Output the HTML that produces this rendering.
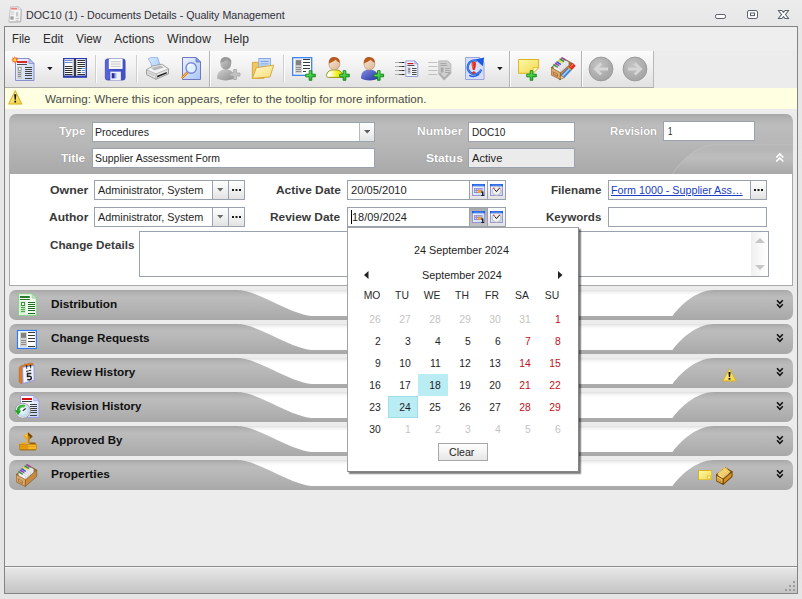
<!DOCTYPE html>
<html>
<head>
<meta charset="utf-8">
<title>DOC10 (1) - Documents Details - Quality Management</title>
<style>
*{box-sizing:border-box;margin:0;padding:0}
html,body{width:802px;height:599px;overflow:hidden;background:#e6e6e6;font-family:"Liberation Sans",sans-serif;font-size:11.5px;color:#1e1e1e}
#win{position:absolute;left:0;top:0;width:802px;height:599px;background:linear-gradient(#ececec 0,#e7e7e7 26px,#e5e5e5 100%);overflow:hidden}
#win div,#win svg{position:absolute}
.tx{height:20px;line-height:20px;white-space:pre;transform-origin:0 50%}
#client{left:4px;top:26px;width:794px;height:568px;background:#ececec;border:1px solid #848484}
#menubar{left:5px;top:27px;width:792px;height:24px;background:#eeeeee}
#toolbar{left:5px;top:51px;width:649px;height:37px;background:linear-gradient(#fbfbfb 0,#f3f3f3 40%,#e9e9e9 70%,#e2e2e2 100%);border-right:1px solid #b9b9b9;border-bottom:1px solid #acacac}
.sep{top:55px;width:2px;height:28px;background:#cfcfcf;border-right:1px solid #fcfcfc}
.sepf{top:51px;width:2px;height:36px;background:#b4b4b4;border-right:1px solid #fdfdfd}
#warn{left:5px;top:88px;width:792px;height:21px;background:#ffffe1}
#hdr{left:9px;top:114px;width:784px;height:60px;border-radius:7px 7px 0 0;overflow:hidden;background:linear-gradient(#a7a7a7 0,#b4b4b4 8%,#bcbcbc 20%,#b8b8b8 45%,#b0b0b0 75%,#a9a9a9 100%)}
#formbox{left:9px;top:174px;width:784px;height:112px;background:#fff;border:1px solid #a9a9a9;border-top:none}
.inp{background:#fff;border:1px solid #9aa2b0}
.btn{background:linear-gradient(#fefefe 0,#f2f2f2 50%,#e2e2e2 100%);border:1px solid #9aa2b0}
.acc{left:9px;width:784px;height:30px}
#status{left:5px;top:566px;width:792px;height:27px;background:linear-gradient(#e9e9e9 0,#d6d6d6 50%,#c4c4c4 100%);border-top:1px solid #8c8c8c;box-shadow:inset 0 1px 0 #f4f4f4}
#cal{left:347px;top:227px;width:232px;height:245px;background:#fff;border:1px solid #a3a3a3;border-right-color:#858585;border-bottom-color:#858585;box-shadow:1.500px 1.500px 1.200px rgba(0,0,0,.5)}
.d{width:30px;height:22px;line-height:22px;text-align:right;padding-right:8px;font-size:11.5px;color:#1e1e1e;transform:scaleX(.9);transform-origin:100% 50%}
.d.o{color:#c3c3c3}
.d.w{color:#c41020}
.dh{width:30px;height:20px;line-height:20px;text-align:center;font-size:11.5px;color:#2a2a2a;transform:scaleX(.9);transform-origin:50% 50%}
</style>
</head>
<body>
<div id="win">
<div id="client"></div>
<div id="menubar"></div>
<div id="toolbar"></div>
<div class="sep" style="left:95px"></div>
<div class="sep" style="left:136px"></div>
<div class="sepf" style="left:209px"></div>
<div class="sep" style="left:283px"></div>
<div class="sepf" style="left:509px"></div>
<div class="sepf" style="left:581px"></div>
<div id="warn"></div>
<div id="hdr">
<svg width="784" height="60" viewBox="0 0 784 60" style="left:0;top:0">
<defs><linearGradient id="tabg" x1="0" y1="0" x2="0" y2="1"><stop offset="0" stop-color="#b4b4b4"/><stop offset=".45" stop-color="#bdbdbd"/><stop offset="1" stop-color="#a8a8a8"/></linearGradient></defs>
<path d="M663.500,60 C669,51 686,31 705,31 L784,31 L784,60 Z" fill="url(#tabg)"/>
<path d="M663.500,60 C669,51 686,31 705,31 L784,31" fill="none" stroke="#c4c4c4" stroke-width="1" opacity=".7"/>
<path d="M767.3,43.5 l3.5,-3.5 l3.5,3.5 M767.3,47.5 l3.5,-3.5 l3.5,3.5" fill="none" stroke="#fff" stroke-width="1.6"/>
</svg>
</div>
<div id="formbox"></div>
<div id="status"></div>
<svg width="12" height="12" viewBox="0 0 12 12" style="left:784px;top:580px"><g fill="#9c9c9c"><rect x="9" y="1" width="2" height="2"/><rect x="5" y="5" width="2" height="2"/><rect x="9" y="5" width="2" height="2"/><rect x="1" y="9" width="2" height="2"/><rect x="5" y="9" width="2" height="2"/><rect x="9" y="9" width="2" height="2"/></g></svg>
<!-- window buttons -->
<svg width="80" height="14" viewBox="0 0 80 14" style="left:712px;top:8px">
<rect x="3.5" y="6.5" width="10" height="4" rx="1.6" fill="#fff" stroke="#5a606b" stroke-width="1"/>
<rect x="35.5" y="2.5" width="10" height="8" rx="1.6" fill="#fff" stroke="#5a606b" stroke-width="1"/>
<rect x="38.5" y="5" width="4" height="2.6" fill="#fff" stroke="#5a606b" stroke-width="1"/>
<path d="M66.3,2.5 h3.6 l1.6,1.9 l1.6,-1.9 h3.600 l-3.300,4 l3.300,4 h-3.600 l-1.600,-1.900 l-1.600,1.900 h-3.600 l3.300,-4 z" fill="#fff" stroke="#5a606b" stroke-width="1.100" stroke-linejoin="round"/>
</svg>
<!-- warn icon -->
<svg width="14.500" height="15" viewBox="0 0 15 14" preserveAspectRatio="none" style="left:8px;top:90px"><use href="#warnico"/></svg>
<!-- title icon -->
<svg width="15" height="17" viewBox="0 0 15 17" style="left:8px;top:5.500px">
<path d="M2.600,0.800 L10.400,0.800 L13.400,3.600 L12.600,15.800 L0.800,15.800 Z" fill="#f3f3f3" stroke="#c2c2c2" stroke-width="1"/>
<path d="M10.400,0.800 L10.400,3.600 L13.400,3.600 Z" fill="#fafafa" stroke="#c2c2c2" stroke-width=".7"/>
<path d="M13.400,4 L12.600,15.800 L1.400,16.400" fill="none" stroke="#b4b4b4" stroke-width=".9"/>
<rect x="3.200" y="1.800" width="6" height="1.800" fill="#f07c7c"/>
<g fill="#c8c8c8"><rect x="3" y="5.600" width="3.400" height="1"/><rect x="3" y="7.600" width="2.600" height="1"/><rect x="8" y="6" width="2.200" height="4.600"/><rect x="7.600" y="12" width="3.600" height="1"/><rect x="7.600" y="13.800" width="3" height="1"/></g>
<rect x="2.400" y="10.400" width="3.200" height="3.200" fill="#9e9e9e"/>
</svg>
<!-- shared defs -->
<svg width="0" height="0" style="left:0;top:0"><defs>
<linearGradient id="gPlus" x1="0" y1="0" x2="1" y2="1"><stop offset="0" stop-color="#8cf47c"/><stop offset=".5" stop-color="#44d044"/><stop offset="1" stop-color="#1ca41c"/></linearGradient>
<g id="plus"><path d="M4.2,0.7 h2.600 v3.500 h3.500 v2.600 h-3.500 v3.500 h-2.600 v-3.500 h-3.500 v-2.600 h3.500 z" fill="url(#gPlus)" stroke="#0c8414" stroke-width=".9" stroke-linejoin="round"/></g>
<linearGradient id="gDoc" x1="0" y1="0" x2="1" y2="1"><stop offset="0" stop-color="#f2f6ff"/><stop offset="1" stop-color="#c4d4f4"/></linearGradient>
<linearGradient id="gSkin" x1="0" y1="0" x2="1" y2="1"><stop offset="0" stop-color="#fbe6d2"/><stop offset="1" stop-color="#d9b594"/></linearGradient>
<linearGradient id="gYel" x1="0" y1="0" x2="1" y2="0"><stop offset="0" stop-color="#ffffff"/><stop offset=".2" stop-color="#fffff0"/><stop offset=".65" stop-color="#f0f020"/><stop offset="1" stop-color="#e4e410"/></linearGradient>
<linearGradient id="gBlu" x1="0" y1="0" x2="1" y2="1"><stop offset="0" stop-color="#7e8ce4"/><stop offset=".6" stop-color="#4a56bc"/><stop offset="1" stop-color="#2a349c"/></linearGradient>
<linearGradient id="gGry" x1="0" y1="0" x2="1" y2="1"><stop offset="0" stop-color="#cfcfcf"/><stop offset="1" stop-color="#8e8e8e"/></linearGradient>
<linearGradient id="gFold" x1="0" y1="0" x2="1" y2="1"><stop offset="0" stop-color="#fffad0"/><stop offset="1" stop-color="#f6dc78"/></linearGradient>
<linearGradient id="gPrev" x1="0" y1="0" x2="1" y2="1"><stop offset="0" stop-color="#eef4ff"/><stop offset="1" stop-color="#a8c4f4"/></linearGradient>
<linearGradient id="gPap" x1="0" y1="0" x2="1" y2="1"><stop offset="0" stop-color="#d8ecff"/><stop offset="1" stop-color="#a4c8f8"/></linearGradient>
<linearGradient id="gNote" x1="0" y1="0" x2="1" y2="1"><stop offset="0" stop-color="#fff9a8"/><stop offset="1" stop-color="#f2d84c"/></linearGradient>
<radialGradient id="gBall" cx=".4" cy=".35" r=".7"><stop offset="0" stop-color="#c4c4c4"/><stop offset="1" stop-color="#a2a2a2"/></radialGradient>
<g id="userhead"><ellipse cx="8" cy="7" rx="5.500" ry="5.900" fill="url(#gSkin)" stroke="#b08860" stroke-width=".6"/><path d="M2.6,6.4 C1.8,1.4 5.8,-0.4 9,0.2 C12.6,0.6 14,3.6 13.2,6 C11.4,4.6 10,3.6 9.200,2.800 C7.800,4.200 5,5.400 2.600,6.400 z" fill="#b85a1c"/></g>
<g id="cardbox">
<path d="M0.25,10.5 L11.5,0.75 L20.75,6 L9.5,15.75 Z" fill="#9a6c34" stroke="#8a5a24" stroke-width="0.7" stroke-linejoin="round"/>
<polygon points="10.60,1.20 17.60,5.20 17.60,10.70 10.60,6.70" fill="#f1f1f6" stroke="#b4b4c4" stroke-width=".45"/>
<polygon points="10.30,-0.30 14.70,2.20 14.70,4.00 10.30,1.50" fill="#a23cb4"/>
<polygon points="9.00,2.60 16.00,6.60 16.00,12.10 9.00,8.10" fill="#f1f1f6" stroke="#b4b4c4" stroke-width=".45"/>
<polygon points="8.70,1.10 13.10,3.60 13.10,5.40 8.70,2.90" fill="#2f9a34"/>
<polygon points="7.40,4.00 14.40,8.00 14.40,13.50 7.40,9.50" fill="#f1f1f6" stroke="#b4b4c4" stroke-width=".45"/>
<polygon points="7.10,2.50 11.50,5.00 11.50,6.80 7.10,4.30" fill="#f0e034"/>
<polygon points="5.80,5.40 12.80,9.40 12.80,14.90 5.80,10.90" fill="#f1f1f6" stroke="#b4b4c4" stroke-width=".45"/>
<polygon points="5.50,3.90 9.90,6.40 9.90,8.20 5.50,5.70" fill="#2c5ce0"/>
<polygon points="4.20,6.80 11.20,10.80 11.20,16.30 4.20,12.30" fill="#f1f1f6" stroke="#b4b4c4" stroke-width=".45"/>
<polygon points="3.90,5.30 8.30,7.80 8.30,9.60 3.90,7.10" fill="#a23cb4"/>
<polygon points="2.60,8.20 9.60,12.20 9.60,17.70 2.60,13.70" fill="#f1f1f6" stroke="#b4b4c4" stroke-width=".45"/>
<polygon points="2.30,6.70 6.70,9.20 6.70,11.00 2.30,8.50" fill="#2f9a34"/>
<polygon points="0.25,10.5 9.5,15.75 9.25,22.5 0.25,18" fill="#dcaa6a" stroke="#8a5a24" stroke-width="0.7" stroke-linejoin="round"/>
<polygon points="9.5,15.75 20.75,6 20.75,12.5 9.25,22.5" fill="#c48a42" stroke="#8a5a24" stroke-width="0.7" stroke-linejoin="round"/>
<polygon points="1.9,14.2 6.9,17.1 6.9,20.2 1.9,17.4" fill="#a87438"/>
<polygon points="2.9,15.6 5.9,17.3 5.9,18.8 2.9,17.1" fill="#dcaa6a"/>
</g>
</defs></svg>

<!-- 1 new document -->
<svg width="26" height="26" viewBox="0 0 26 26" style="left:10px;top:56px">
<path d="M5.5,2.5 h13.500 l5,5 v17 h-18.500 z" fill="url(#gDoc)" stroke="#8a90cc" stroke-width="1"/>
<path d="M19,2.5 v5 h5 z" fill="#b8c8f4" stroke="#8a90cc" stroke-width=".8"/>
<rect x="7" y="8" width="10" height="1" fill="#505050"/>
<rect x="7" y="10.500" width="5" height="12.500" fill="#cfcfcf"/>
<rect x="8.500" y="11.700" width="2.600" height="2.600" fill="#fff" stroke="#8c8c8c" stroke-width=".8"/>
<g fill="#8e8e8e"><rect x="8" y="16" width="3" height="1"/><rect x="8" y="18" width="3" height="1"/><rect x="8" y="20" width="3" height="1"/></g>
<g fill="#454545"><rect x="15" y="11" width="7" height="1"/><rect x="15" y="13" width="7" height="1"/><rect x="15" y="15" width="7" height="1"/><rect x="15" y="17" width="7" height="1"/><rect x="15" y="19" width="7" height="1"/><rect x="15" y="22" width="7" height="1"/></g>
<rect x="7" y="5.100" width="10.200" height="1.800" fill="#e01414"/>
<g transform="translate(1.700,0) scale(.78)"><path d="M4,0.400 l1,2.200 l2.400,-1 l-1,2.400 l2.200,1 l-2.200,1 l1,2.400 l-2.400,-1 l-1,2.200 l-1,-2.200 l-2.400,1 l1,-2.400 l-2.200,-1 l2.200,-1 l-1,-2.400 l2.400,1 z" fill="#ff5a10"/><circle cx="4" cy="5" r="2" fill="#ffd83c"/></g>
</svg>
<svg width="6" height="4" viewBox="0 0 6 4" style="left:46.5px;top:67px"><path d="M0.2,0 h5.400 l-2.700,3.200 z" fill="#1a1a1a"/></svg>

<!-- 2 book -->
<svg width="26" height="22" viewBox="0 0 26 22" style="left:62px;top:57px">
<rect x="1" y="1" width="24" height="19.800" fill="#2c3cb0"/>
<rect x="2.400" y="2.200" width="9.800" height="16.300" fill="#fdfdfd"/>
<rect x="13.800" y="2.200" width="9.800" height="16.300" fill="#fdfdfd"/>
<rect x="10.600" y="2.200" width="1.600" height="16.300" fill="#c4c4c4"/><rect x="13.800" y="2.200" width="1.400" height="16.300" fill="#d8d8d8"/>
<rect x="12.200" y="1.600" width="1.600" height="18" fill="#2a2a2a"/>
<g fill="#6c8ccc"><rect x="3" y="3" width="7.400" height="1"/><rect x="3" y="5" width="7.400" height="1"/></g>
<g fill="#303030"><rect x="3" y="9" width="7.400" height="1"/><rect x="3" y="11" width="7.400" height="1"/><rect x="3" y="13" width="7.400" height="1"/><rect x="3" y="15" width="7.400" height="1"/><rect x="3" y="17" width="7.400" height="1"/>
<rect x="15.400" y="3" width="7.600" height="1"/><rect x="15.400" y="5" width="7.600" height="1"/><rect x="15.400" y="7" width="7.600" height="1"/><rect x="15.400" y="9" width="7.600" height="1"/><rect x="15.400" y="11" width="7.600" height="1"/><rect x="15.400" y="13" width="3.400" height="1"/><rect x="15.400" y="15" width="3.400" height="1"/><rect x="15.400" y="17" width="7.600" height="1"/></g>
<g fill="#5c94d4"><rect x="19.600" y="11" width="3.400" height="1"/><rect x="19.600" y="13" width="3.400" height="1"/><rect x="19.600" y="15" width="3.400" height="1"/></g>
</svg>

<!-- 3 floppy -->
<svg width="23" height="23" viewBox="0 0 24 24" style="left:103.7px;top:57.8px">
<defs><linearGradient id="gFl" x1="0" y1="0" x2="1" y2="0"><stop offset="0" stop-color="#5a68d8"/><stop offset=".5" stop-color="#3c4cc4"/><stop offset="1" stop-color="#4454c8"/></linearGradient></defs>
<rect x="1.400" y="1" width="20.600" height="22" rx="2.200" fill="url(#gFl)" stroke="#3840a8" stroke-width=".8"/>
<rect x="5" y="1" width="14.4" height="10.4" fill="#fbfbfb"/>
<g fill="#c4c4c4"><rect x="7" y="3.4" width="10.4" height="1"/><rect x="7" y="5.8" width="10.4" height="1"/><rect x="7" y="8.2" width="10.4" height="1"/></g>
<rect x="6.6" y="14.200" width="11" height="9" fill="#eef0fa"/>
<rect x="8" y="15.800" width="3.200" height="5.400" fill="#2830a0"/>
<rect x="11.200" y="15.800" width="1.800" height="5.400" fill="#a4acdc"/>
</svg>

<!-- 4 printer -->
<svg width="25" height="25" viewBox="0 0 26 26" style="left:145.3px;top:55.600px">
<path d="M3.400,3 Q5.600,1.200 8.400,1.600 Q11.400,2 13,1.400 L16.400,11.400 L8,14.200 Q6.800,7 3.400,3 Z" fill="url(#gPap)" stroke="#88a4e4" stroke-width=".8"/>
<path d="M1.6,14.4 L8,10.6 L17.6,8.6 L24.4,13.4 L24.4,18.6 L11.4,24.2 L1.6,19.4 Z" fill="#e4e4e4" stroke="#8c8c8c" stroke-width=".9" stroke-linejoin="round"/>
<path d="M1.6,14.4 L11.4,18.6 L24.4,13.4 L17.6,8.6 L8,10.6 Z" fill="#f4f4f4" stroke="#9a9a9a" stroke-width=".7"/>
<path d="M6.4,12.6 L16.6,10 L19.6,12 L9.6,15 Z" fill="#b8b8b8"/>
<path d="M11.4,18.6 L11.4,24.2" stroke="#9a9a9a" stroke-width=".7"/>
<path d="M12.6,20.6 L22.6,16.6 L22.6,18.2 L12.6,22.4 Z" fill="#1c1c1c"/>
<path d="M3,16.6 L9.8,19.6 L9.8,21 L3,18 Z" fill="#c2c2c2"/>
</svg>

<!-- 5 preview -->
<svg width="24" height="26" viewBox="0 0 24 26" style="left:178px;top:55px">
<path d="M4.500,2.500 h13.500 l4.500,4.500 v17.500 h-18 z" fill="url(#gPrev)" stroke="#7078c4" stroke-width="1"/>
<path d="M18,2.500 v4.500 h4.500 z" fill="#6c9cf0" stroke="#7078c4" stroke-width=".8"/>
<path d="M9.400,17.400 L4.600,22.400" stroke="#e08818" stroke-width="2.600" stroke-linecap="round"/>
<path d="M9.400,17.400 L4.600,22.400" stroke="#ffc060" stroke-width="1" stroke-linecap="round"/>
<circle cx="13.200" cy="13" r="5.200" fill="#dcf2ff" stroke="#7c84d4" stroke-width="1.400"/>
<path d="M10,12.200 A3.400,3.400 0 0 1 13.400,9.400" stroke="#fff" stroke-width="1.400" fill="none"/>
</svg>

<!-- 6 user gray plus -->
<svg width="26" height="26" viewBox="0 0 26 26" style="left:216px;top:56px">
<path d="M1,22.600 C1,16 4,13.400 9.600,13.400 C15.400,13.400 18.400,16 18.400,22.600 C14,25 5,25 1,22.600 z" fill="url(#gGry)"/>
<ellipse cx="9.800" cy="7.600" rx="5.400" ry="6.200" fill="url(#gGry)"/>
<path d="M4.400,7 C4,2 8,0.600 11,1.200 C14.600,1.800 16,4.600 15.200,7 C13,5.600 11.600,4.600 10.800,3.600 C9.400,5.200 6.800,6.200 4.400,7 z" fill="#9a9a9a"/>
<path d="M17.500,13.500 h3 v3.500 h3.500 v3 h-3.500 v3.500 h-3 v-3.500 h-3.500 v-3 h3.500 z" fill="#c2c2c2" stroke="#a6a6a6" stroke-width=".8"/>
</svg>

<!-- 7 folder -->
<svg width="24" height="23.300" viewBox="0 0 26 24" preserveAspectRatio="none" style="left:251.2px;top:57.200px">
<path d="M1.500,5.500 h6.500 l2,2 h4 v14.500 h-12.500 z" fill="#f0c860" stroke="#d4a030" stroke-width=".9"/>
<rect x="8.5" y="1.500" width="12.500" height="12" fill="#c8dcf8" stroke="#7ca0e0" stroke-width=".9"/>
<g fill="#7ca0e0"><rect x="10.500" y="4" width="8.500" height="1.200"/><rect x="10.500" y="6.600" width="8.500" height="1"/><rect x="10.500" y="9" width="6" height="1"/></g>
<path d="M1.500,22 L5.800,11 L24.600,8.400 L20.600,20.600 Z" fill="url(#gFold)" stroke="#d4a030" stroke-width=".9" stroke-linejoin="round"/>
</svg>

<!-- 8 list plus -->
<svg width="26" height="26" viewBox="0 0 26 26" style="left:291px;top:56px">
<rect x="1.700" y="1.700" width="19" height="17.600" fill="#fefefe" stroke="#3c80f4" stroke-width="1.300"/>
<rect x="4" y="3.400" width="7" height="14" fill="#d2d2d2"/>
<rect x="5" y="4.200" width="5" height="5" fill="#818181"/>
<g fill="#8c8c8c"><rect x="5" y="11" width="5" height="1"/><rect x="5" y="13" width="5" height="1"/><rect x="5" y="15" width="5" height="1"/></g>
<g fill="#3a3a3a"><rect x="12" y="3" width="7" height="1"/><rect x="12" y="6" width="7" height="1"/><rect x="12" y="9" width="7" height="1"/><rect x="12" y="12" width="7" height="1"/><rect x="12" y="15" width="3" height="1"/></g>
<use href="#plus" x="14" y="14"/>
</svg>

<!-- 9 user yellow plus -->
<svg width="26" height="26" viewBox="0 0 26 26" style="left:325px;top:56px">
<path d="M1.500,19.600 C2,15.400 5,13.800 9.400,13.800 C14,13.800 17.200,15.400 17.800,19.600 L17.800,21.400 L3.600,21.400 C2.200,21.400 1.400,20.600 1.500,19.600 z" fill="url(#gYel)" stroke="#8a8a00" stroke-width=".9"/>
<use href="#userhead" x="1.400" y="1"/>
<use href="#plus" x="14" y="14"/>
</svg>

<!-- 10 user blue plus -->
<svg width="26" height="26" viewBox="0 0 26 26" style="left:360px;top:56px">
<path d="M1,22.600 C1,16 4,13.800 9.400,13.800 C15,13.800 18,16 18,22.600 C13.600,25.200 5.400,25.200 1,22.600 z" fill="url(#gBlu)"/>
<use href="#userhead" x="1.400" y="1"/>
<use href="#plus" x="13.3" y="14"/>
</svg>

<!-- 11 list doc -->
<svg width="26" height="18" viewBox="0 0 26 18" style="left:394px;top:60px">
<g fill="#b0b0b0"><rect x="1" y="2" width="9.400" height="1"/><rect x="1" y="6" width="9.400" height="1"/><rect x="1" y="10" width="9.400" height="1"/><rect x="1" y="14" width="9.400" height="1"/></g>
<g fill="#2a2a2a"><rect x="7.400" y="2" width="3" height="1"/><rect x="7.400" y="6" width="3" height="1"/><rect x="7.400" y="10" width="3" height="1"/><rect x="7.400" y="14" width="3" height="1"/></g>
<g fill="#6a6a6a"><rect x="5" y="2" width="2.400" height="1"/><rect x="5" y="6" width="2.400" height="1"/><rect x="5" y="10" width="2.400" height="1"/><rect x="5" y="14" width="2.400" height="1"/></g>
<path d="M11.800,0.900 h9 l3,3 v12.600 h-12 z" fill="#eef2fe" stroke="#9098d0" stroke-width=".9"/>
<path d="M20.800,0.900 v3 h3 z" fill="#c0ccf4" stroke="#9098d0" stroke-width=".6"/>
<rect x="13.400" y="3" width="6" height="1.200" fill="#d01818"/>
<rect x="13.400" y="5" width="7" height="1" fill="#505050"/>
<rect x="13.700" y="7.500" width="2.800" height="6.300" fill="#b8b8b8"/><rect x="14.400" y="8.400" width="1.400" height="1.600" fill="#707070"/><rect x="14.400" y="11" width="1.400" height="1" fill="#808080"/>
<g fill="#505050"><rect x="18" y="8" width="4.600" height="1"/><rect x="18" y="10" width="4.600" height="1"/><rect x="18" y="12" width="4.600" height="1"/><rect x="18" y="14" width="4.600" height="1"/></g>
</svg>

<!-- 12 list gray -->
<svg width="26" height="22" viewBox="0 0 26 22" style="left:427px;top:60px">
<g fill="#c0c0c0"><rect x="1.300" y="2" width="9" height="1"/><rect x="1.300" y="6" width="9" height="1"/><rect x="1.300" y="10" width="9" height="1"/><rect x="1.300" y="14" width="9" height="1"/></g>
<path d="M11.800,0.900 h9 l3,3 v9.600 l-6.600,6.600 l-5.400,-6 z" fill="#d0d0d0" stroke="#b4b4b4" stroke-width=".9"/>
<g fill="#a8a8a8"><rect x="13.400" y="3" width="6" height="1.200"/><rect x="13.400" y="5" width="7" height="1"/><rect x="13.700" y="7.500" width="2.800" height="5"/><rect x="18" y="8" width="4.600" height="1"/><rect x="18" y="10" width="4.600" height="1"/><rect x="18" y="12" width="4" height="1"/></g>
<path d="M12.400,13.400 l4.800,5.400 l6.600,-7" fill="none" stroke="#adadad" stroke-width="1.700"/>
</svg>

<!-- 13 refresh doc -->
<svg width="24" height="26" viewBox="0 0 24 26" style="left:462.600px;top:55px">
<path d="M2.500,2.500 h14 l4.500,4.500 v17.500 h-18.500 z" fill="#d6def8" stroke="#9ca4dc" stroke-width="1"/>
<path d="M16.500,2.500 v4.500 h4.500 z" fill="#b4c0f0" stroke="#9ca4dc" stroke-width=".8"/>
<path d="M14.200,5.800 A7,7 0 1 0 18.300,14.600" fill="none" stroke="#1c5ce0" stroke-width="2.300"/>
<path d="M14.200,5.800 A7,7 0 1 0 18.300,14.600" fill="none" stroke="#6ca0f8" stroke-width=".7"/>
<path d="M12.400,4.400 L21.200,2.600 L19.800,11.200 Z" fill="#1c5ce0"/>
<path d="M6.200,20.400 Q11,23 16.200,19.600" fill="none" stroke="#1c5ce0" stroke-width="1.200"/>
<path d="M10.800,6.600 C13.600,6.600 13.400,10 11.700,15 L9.900,15 C8.200,10 8,6.600 10.800,6.600 z" fill="#e42c14"/>
<path d="M10.200,7.600 C9.400,8.600 9.600,10.400 10.200,12.600" fill="none" stroke="#ff8a5c" stroke-width=".8"/>
<rect x="10.100" y="16.200" width="1.400" height="3" fill="#e42c14"/><rect x="9" y="17.100" width="3.600" height="1.100" fill="#e42c14"/>
</svg>
<svg width="6" height="4" viewBox="0 0 6 4" style="left:496.5px;top:67px"><path d="M0.2,0 h5.400 l-2.700,3.200 z" fill="#1a1a1a"/></svg>

<!-- 14 note plus -->
<svg width="24" height="24" viewBox="0 0 24 24" style="left:517px;top:58px">
<path d="M1.600,1.500 h20 v8.200 l-5.600,5.600 h-14.400 z" fill="url(#gNote)" stroke="#d8b420" stroke-width="1"/>
<path d="M21.600,9.700 h-5.600 v5.600 z" fill="#fff8cc" stroke="#d8b420" stroke-width=".8"/>
<use href="#plus" x="9" y="12"/>
</svg>

<!-- 15 card box + pencil -->
<svg width="26" height="26" viewBox="0 0 26 26" style="left:551.25px;top:57.4px">
<use href="#cardbox" x="0" y="0"/>
<polygon points="20.16,13.37 17.24,10.63 10.19,18.13 13.11,20.87" fill="#3f8cf0" stroke="#2458b8" stroke-width=".5"/>
<polygon points="18.9,12.2 18.0,11.35 10.95,18.85 11.85,19.7" fill="#a8d0ff"/>
<polygon points="13.11,20.87 10.19,18.13 8.56,22.8" fill="#e8c890" stroke="#8a6430" stroke-width=".5"/>
<polygon points="9.9,22.0 9.3,21.4 8.4,23.0" fill="#1a1a1a"/>
<polygon points="21.0,12.47 18.08,9.73 17.24,10.63 20.16,13.37" fill="#f4c43c" stroke="#b88a18" stroke-width=".4"/>
<polygon points="24.43,8.85 21.51,6.11 18.08,9.73 21.0,12.47" fill="#e8281c" stroke="#a81410" stroke-width=".5"/>
<polygon points="22.6,7.5 21.6,6.6 18.9,9.5 19.9,10.4" fill="#ff6a50"/>
</svg>

<!-- 16/17 back forward -->
<svg width="26" height="26" viewBox="0 0 26 26" style="left:588px;top:56px">
<circle cx="13" cy="13" r="11.900" fill="url(#gBall)" stroke="#9c9c9c" stroke-width="1"/>
<path d="M7.400,13 H20 M13.200,7.600 L7.400,13 L13.200,18.400" fill="none" stroke="#d6d6d6" stroke-width="2.800" stroke-linejoin="miter"/>
</svg>
<svg width="26" height="26" viewBox="0 0 26 26" style="left:622px;top:56px">
<circle cx="13" cy="13" r="11.900" fill="url(#gBall)" stroke="#9c9c9c" stroke-width="1"/>
<path d="M18.600,13 H6 M12.800,7.600 L18.600,13 L12.800,18.400" fill="none" stroke="#d6d6d6" stroke-width="2.800" stroke-linejoin="miter"/>
</svg>
<!-- header inputs -->
<div class="inp" style="left:92px;top:122px;width:283px;height:20px"></div>
<div class="btn" style="left:359px;top:123px;width:15px;height:18px;border:none;border-left:1px solid #b4bac4"></div>
<svg width="6.400" height="3.600" viewBox="0 0 7 4" style="left:363.600px;top:130.200px"><path d="M0,0 h7 l-3.5,4 z" fill="#5c5c5c"/></svg>
<div class="inp" style="left:92px;top:148px;width:283px;height:20px"></div>
<div class="inp" style="left:468px;top:122px;width:107px;height:20px"></div>
<div class="inp" style="left:468px;top:148px;width:107px;height:20px;background:#ebebeb"></div>
<div class="inp" style="left:663px;top:121px;width:92px;height:20px"></div>
<!-- owner / author -->
<div class="inp" style="left:94px;top:180px;width:151px;height:20px"></div>
<div class="btn" style="left:212px;top:180px;width:17px;height:20px"></div>
<div class="btn" style="left:228px;top:180px;width:17px;height:20px"></div>
<svg width="6.400" height="3.600" viewBox="0 0 7 4" style="left:217.300px;top:188.200px"><path d="M0,0 h7 l-3.5,4 z" fill="#6a6a6a"/></svg>
<svg width="9" height="2" viewBox="0 0 9 2" style="left:232px;top:189px"><path d="M0,0h2v2h-2z M3.5,0h2v2h-2z M7,0h2v2h-2z" fill="#1a1a1a"/></svg>
<div class="inp" style="left:94px;top:207px;width:151px;height:20px"></div>
<div class="btn" style="left:212px;top:207px;width:17px;height:20px"></div>
<div class="btn" style="left:228px;top:207px;width:17px;height:20px"></div>
<svg width="6.400" height="3.600" viewBox="0 0 7 4" style="left:217.300px;top:215.200px"><path d="M0,0 h7 l-3.5,4 z" fill="#6a6a6a"/></svg>
<svg width="9" height="2" viewBox="0 0 9 2" style="left:232px;top:216px"><path d="M0,0h2v2h-2z M3.5,0h2v2h-2z M7,0h2v2h-2z" fill="#1a1a1a"/></svg>
<!-- dates -->
<div class="inp" style="left:347px;top:180px;width:159px;height:20px"></div>
<div class="btn" style="left:469px;top:180px;width:19px;height:20px"></div>
<div class="btn" style="left:487px;top:180px;width:19px;height:20px"></div>
<div class="inp" style="left:347px;top:207px;width:159px;height:20px"></div>
<div class="btn" style="left:469px;top:207px;width:19px;height:20px;background:linear-gradient(#a9a9a9,#c3c3c3)"></div>
<div class="btn" style="left:487px;top:207px;width:19px;height:20px"></div>
<!-- caret -->
<div style="left:351px;top:210px;width:1px;height:14px;background:#000"></div>
<!-- calendar / clock icons -->
<svg width="13" height="12.500" viewBox="0 0 13 12.500" style="left:472px;top:184px"><use href="#icCal"/></svg>
<svg width="13" height="12.500" viewBox="0 0 13 12.500" style="left:472px;top:211px"><use href="#icCal"/></svg>
<svg width="13" height="12.500" viewBox="0 0 13 12.500" style="left:490px;top:184px"><use href="#icClk"/></svg>
<svg width="13" height="12.500" viewBox="0 0 13 12.500" style="left:490px;top:211px"><use href="#icClk"/></svg>
<svg width="0" height="0" style="left:0;top:0"><defs>
<g id="icCal"><rect x="0.500" y="0.500" width="12" height="11" fill="url(#gIcB)" stroke="#9c94d4"/><rect x="0" y="0" width="13" height="2.300" fill="#2060e8"/><rect x="1.500" y=".8" width="10" height=".6" fill="#80b0fa"/><rect x="2" y="4" width="8.400" height="5" fill="#8c86c8"/><g fill="#fff"><rect x="2.800" y="4.700" width="1" height="1"/><rect x="4.700" y="4.700" width="1" height="1"/><rect x="6.600" y="4.700" width="1" height="1"/><rect x="8.500" y="4.700" width="1" height="1"/><rect x="2.800" y="6.900" width="1" height="1"/><rect x="4.700" y="6.900" width="1" height="1"/></g><rect x="6" y="6" width="3" height="3" fill="#f8a020"/><path d="M9.400,7.600 h2 v3.600 h.8 v.9 h-3 v-.9 h.9 v-2.600 h-.7 z" fill="#111"/></g>
<g id="icClk"><rect x="0.500" y="0.500" width="12" height="11" fill="url(#gIcB)" stroke="#9c94d4"/><rect x="0" y="0" width="13" height="2.300" fill="#2060e8"/><rect x="1.500" y=".8" width="10" height=".6" fill="#80b0fa"/><circle cx="6.500" cy="6.800" r="4.500" fill="#f0f0f0" stroke="#b0b0b0" stroke-width=".9"/><circle cx="3.900" cy="4.400" r=".7" fill="#e02020"/><circle cx="9.300" cy="4.400" r=".7" fill="#e02020"/><path d="M4.600,5.400 L6.500,7.600 L8.800,4.800" stroke="#111" stroke-width="1" fill="none"/></g>
<linearGradient id="gIcB" x1="0" y1="0" x2="1" y2="1"><stop offset="0" stop-color="#fbfdff"/><stop offset="1" stop-color="#bcdaf8"/></linearGradient>
</defs></svg>
<!-- filename / keywords -->
<div class="inp" style="left:608px;top:180px;width:159px;height:20px"></div>
<div class="btn" style="left:750px;top:180px;width:17px;height:20px"></div>
<svg width="9" height="2" viewBox="0 0 9 2" style="left:754px;top:189px"><path d="M0,0h2v2h-2z M3.5,0h2v2h-2z M7,0h2v2h-2z" fill="#1a1a1a"/></svg>
<div class="inp" style="left:608px;top:207px;width:159px;height:20px"></div>
<!-- textarea -->
<div class="inp" style="left:139px;top:231px;width:630px;height:46px"></div>
<div style="left:751px;top:232px;width:17px;height:44px;background:linear-gradient(90deg,#efefef,#fafafa 60%,#ffffff)"></div>
<svg width="10" height="5" viewBox="0 0 10 5" style="left:755px;top:238px"><path d="M0,5 h10 l-5,-5 z" fill="#c6c6c6"/></svg>
<svg width="10" height="5" viewBox="0 0 10 5" style="left:755px;top:265px"><path d="M0,0 h10 l-5,5 z" fill="#c6c6c6"/></svg>
<svg width="0" height="0" style="left:0;top:0"><defs>
<linearGradient id="ag" x1="0" y1="0" x2="0" y2="1"><stop offset="0" stop-color="#a6a6a6"/><stop offset=".1" stop-color="#b3b3b3"/><stop offset=".24" stop-color="#bcbcbc"/><stop offset=".5" stop-color="#b6b6b6"/><stop offset=".8" stop-color="#aeaeae"/><stop offset="1" stop-color="#a8a8a8"/></linearGradient>
<linearGradient id="aw" x1="0" y1="0" x2="0" y2="1"><stop offset="0" stop-color="#e0e0e0"/><stop offset=".12" stop-color="#f8f8f8"/><stop offset=".22" stop-color="#ffffff"/><stop offset="1" stop-color="#ffffff"/></linearGradient>
<g id="accshape"><rect x="0" y="0" width="784" height="30" rx="7" ry="7" fill="url(#ag)"/><path d="M228,0 C250,0 282,26 306,26 L663.500,26 C669,18 686,0 705,0 Z" fill="url(#aw)"/></g>
<path id="chev" d="M0.700,0.300 l2.900,3 l2.900,-3 M0.700,4.300 l2.900,3 l2.900,-3" fill="none" stroke="#111" stroke-width="1.500"/>
</defs></svg>
<svg class="acc" viewBox="0 0 784 30" style="top:290px"><use href="#accshape"/><use href="#chev" x="767.300" y="10"/></svg>
<svg class="acc" viewBox="0 0 784 30" style="top:324px"><use href="#accshape"/><use href="#chev" x="767.300" y="10"/></svg>
<svg class="acc" viewBox="0 0 784 30" style="top:358px"><use href="#accshape"/><use href="#chev" x="767.300" y="10"/></svg>
<svg class="acc" viewBox="0 0 784 30" style="top:392px"><use href="#accshape"/><use href="#chev" x="767.300" y="10"/></svg>
<svg class="acc" viewBox="0 0 784 30" style="top:426px"><use href="#accshape"/><use href="#chev" x="767.300" y="10"/></svg>
<svg class="acc" viewBox="0 0 784 30" style="top:460px"><use href="#accshape"/><use href="#chev" x="767.300" y="10"/></svg>
<!-- accordion icons -->
<!-- distribution -->
<svg width="22" height="26" viewBox="0 0 22 26" style="left:17px;top:292px">
<path d="M1.500,1.700 h13.700 l4.400,4.400 v17.400 h-18.100 z" fill="#f2fbf2" stroke="#8ccc8c" stroke-width="1.100"/>
<path d="M2.400,2.600 h12.400 l3.900,3.900 v16.100 h-16.300 z" fill="none" stroke="#d0ecd0" stroke-width=".8"/>
<path d="M15.200,1.700 v4.400 h4.400 z" fill="#cfe6d8" stroke="#8ccc8c" stroke-width=".8"/>
<rect x="3" y="4" width="9.800" height="2" fill="#2a7c2c"/>
<rect x="3" y="7" width="9.800" height="1" fill="#2c702c"/>
<rect x="3.300" y="9.500" width="5.300" height="12" fill="#c6e6c6"/>
<rect x="4.500" y="10.500" width="3" height="3" fill="#fff" stroke="#3a9a3c" stroke-width="1"/>
<g fill="#4aac4c"><rect x="4" y="15" width="4" height="1"/><rect x="4" y="17" width="4" height="1"/><rect x="4" y="19" width="4" height="1"/></g>
<g fill="#1e6e20"><rect x="11" y="10" width="7" height="1"/><rect x="11" y="12" width="7" height="1"/><rect x="11" y="14" width="7" height="1"/><rect x="11" y="16" width="7" height="1"/><rect x="11" y="18" width="7" height="1"/><rect x="11" y="21" width="7" height="1"/></g>
</svg>
<!-- change requests -->
<svg width="22" height="21" viewBox="0 0 22 21" style="left:16px;top:329px">
<rect x="1.500" y="1.500" width="18.900" height="17.900" fill="#ffffff" stroke="#2c7cf8" stroke-width="1.200"/>
<rect x="4" y="3" width="7" height="14.800" fill="#d2d2d2"/>
<rect x="5" y="4" width="5" height="4.800" fill="#818181"/>
<g fill="#8c8c8c"><rect x="5" y="11" width="5" height="1"/><rect x="5" y="13" width="5" height="1"/><rect x="5" y="15" width="5" height="1"/></g>
<g fill="#3a3a3a"><rect x="12" y="3" width="7" height="1"/><rect x="12" y="6" width="7" height="1"/><rect x="12" y="9" width="7" height="1"/><rect x="12" y="12" width="7" height="1"/><rect x="12" y="17" width="7" height="1"/></g>
</svg>
<!-- review history -->
<svg width="18" height="23" viewBox="0 0 18 23" style="left:18px;top:362px">
<defs><linearGradient id="gPg" x1="0" y1="0" x2="1" y2="1"><stop offset="0" stop-color="#ffffff"/><stop offset="1" stop-color="#e4e8fa"/></linearGradient></defs>
<polygon points="1.200,5.400 3.600,3.400 5.600,3.400 6.200,2.200 9.600,2 10.200,1.200 15,1.400 15,4 4.500,5.200 4.200,21.200 3.300,22 1.200,19.600" fill="#e07820" stroke="#b85c14" stroke-width=".5"/>
<polygon points="4.600,5.200 16,3.500 16.300,18.300 5,21.500" fill="url(#gPg)" stroke="#8c98e0" stroke-width="1" stroke-linejoin="round"/>
<path d="M8.600,3.800 L8.700,6.800 M12.500,3.300 L12.700,6.300" stroke="#2a4a2a" stroke-width="1"/>
<circle cx="8.600" cy="4" r=".8" fill="#111"/><circle cx="12.500" cy="3.500" r=".8" fill="#111"/>
<path d="M8,9.400 L10.400,9 L10.800,8.600 L13.200,8.300" stroke="#2e2e2e" stroke-width="1" fill="none"/>
<path d="M13.300,11.400 h-3.800 v3 q3.800,-.8 3.800,1.600 q0,2.400 -4,1.500" fill="none" stroke="#222" stroke-width="1.500"/>
</svg>
<!-- revision history -->
<svg width="26" height="25" viewBox="0 0 26 25" style="left:14px;top:394px">
<defs><linearGradient id="gRd" x1="0" y1="0" x2=".6" y2="1"><stop offset="0" stop-color="#ffffff"/><stop offset=".35" stop-color="#f4f8ff"/><stop offset="1" stop-color="#c4d8f8"/></linearGradient>
<radialGradient id="gCk" cx=".45" cy=".4" r=".6"><stop offset="0" stop-color="#ffffff"/><stop offset="1" stop-color="#bcdcf4"/></radialGradient></defs>
<path d="M6.500,1.500 h13.200 l5.300,5.300 v16.700 h-18.500 z" fill="url(#gRd)" stroke="#a49cdc" stroke-width="1"/>
<path d="M19.700,1.500 v5.300 h5.300 z" fill="#bcd4f8" stroke="#a49cdc" stroke-width=".7"/>
<rect x="8" y="4" width="10" height="2" fill="#d80c10"/>
<rect x="8" y="7" width="10" height="1" fill="#404040"/>
<g fill="#3e3e3e"><rect x="16" y="10" width="7" height="1"/><rect x="16" y="12" width="7" height="1"/><rect x="16" y="14" width="7" height="1"/><rect x="16" y="16" width="7" height="1"/><rect x="16" y="18" width="7" height="1"/><rect x="16" y="21" width="7" height="1"/></g>
<circle cx="8.750" cy="16.750" r="7.600" fill="#e8e8ee" stroke="#9c9ca6" stroke-width="1"/>
<circle cx="8.750" cy="16.750" r="6" fill="url(#gCk)" stroke="#c4c4d0" stroke-width=".6"/>
<path d="M10.600,12.300 A4.800,4.800 0 0 0 4.100,16.400" fill="none" stroke="#1ca81c" stroke-width="2.600"/>
<path d="M0.900,16 L7.200,16.600 L4,21.200 Z" fill="#1ca81c"/>
<path d="M10.200,12 A4.800,4.800 0 0 0 5.200,14.600" fill="none" stroke="#6cdc5c" stroke-width=".9"/>
<path d="M8.750,16.750 L11.700,14.400" stroke="#333" stroke-width="1.300"/>
</svg>
<!-- approved by (stamp) -->
<svg width="19" height="19" viewBox="0 0 19 19" style="left:18.500px;top:431.500px">
<polygon points="9,0.300 4.200,4.300 7.500,7.600 7.500,4.300 9,4.300" fill="#f4a814"/>
<polygon points="9,0.300 13.800,4.300 10.500,7.600 10.500,4.300 9,4.300" fill="#7a4a00"/>
<polygon points="6,3.600 7.800,2.400 7.800,5.600" fill="#ffd880"/>
<rect x="7.500" y="3.800" width="1.700" height="7.400" fill="#f0a818"/><rect x="9.200" y="3.800" width="1.300" height="7.400" fill="#b87808"/>
<polygon points="2.200,10.600 7.500,10.600 7.500,12.600 1,12.600" fill="#f4a814"/>
<polygon points="10.500,10.600 16,10.600 17.400,12.600 10.500,12.600" fill="#985e00"/>
<rect x="0.500" y="12.500" width="9" height="5" fill="#e89c0c"/><rect x="9.500" y="12.500" width="8" height="5" fill="#ffb824"/>
<rect x="0.500" y="14" width="17" height=".8" fill="#d08808" opacity=".6"/>
<rect x="1" y="17.400" width="16" height="1" fill="#9c6804"/>
<rect x="0.500" y="12.500" width="17" height="5" fill="none" stroke="#b87c08" stroke-width=".6"/>
</svg>
<!-- properties (card box) -->
<svg width="22" height="24" viewBox="0 0 22 24" style="left:16px;top:464px"><use href="#cardbox"/></svg>
<!-- warning triangle (review history) -->
<svg width="15" height="14" viewBox="0 0 15 14" style="left:721.500px;top:367.500px"><use href="#warnico"/></svg>
<svg width="0" height="0" style="left:0;top:0"><defs>
<linearGradient id="gW" x1="0" y1="0" x2="1" y2="1"><stop offset="0" stop-color="#fff6a0"/><stop offset="1" stop-color="#f2d040"/></linearGradient>
<g id="warnico"><path d="M7.500,0.800 L14.200,13 L0.800,13 Z" fill="url(#gW)" stroke="#d8b020" stroke-width="1" stroke-linejoin="round"/><path d="M6.400,4 h2.200 l-.5,5 h-1.200 z" fill="#111"/><rect x="6.600" y="10" width="1.800" height="1.700" fill="#111"/></g>
</defs></svg>
<!-- properties right: note + small cardbox -->
<svg width="14.300" height="10.400" viewBox="0 0 15 11" preserveAspectRatio="none" style="left:697.800px;top:469.900px">
<rect x="0.500" y="0.500" width="14" height="10" fill="url(#gNote)" stroke="#d8b020" stroke-width="1"/>
<rect x="10.200" y="6.400" width="3" height="3" fill="#fff6c0" stroke="#d8b020" stroke-width=".7"/>
</svg>
<svg width="17" height="18.5" viewBox="0 0 22 24" style="left:715.500px;top:466.5px"><use href="#cardbox2"/></svg>
<svg width="0" height="0" style="left:0;top:0"><defs>
<g id="cardbox2">
<path d="M0.25,10.5 L11.5,0.75 L20.75,6 L9.5,15.75 Z" fill="#b07a2c" stroke="#7a4800" stroke-width="1.400" stroke-linejoin="round"/>
<polygon points="10.60,1.20 17.60,5.20 17.60,10.70 10.60,6.70" fill="#fbe7a0" stroke="#d4a02c" stroke-width=".9"/>
<polygon points="10.30,-0.30 14.70,2.20 14.70,4.00 10.30,1.50" fill="#f4d470"/>
<polygon points="9.00,2.60 16.00,6.60 16.00,12.10 9.00,8.10" fill="#fbe7a0" stroke="#d4a02c" stroke-width=".9"/>
<polygon points="8.70,1.10 13.10,3.60 13.10,5.40 8.70,2.90" fill="#f4d470"/>
<polygon points="7.40,4.00 14.40,8.00 14.40,13.50 7.40,9.50" fill="#fbe7a0" stroke="#d4a02c" stroke-width=".9"/>
<polygon points="7.10,2.50 11.50,5.00 11.50,6.80 7.10,4.30" fill="#f4d470"/>
<polygon points="5.80,5.40 12.80,9.40 12.80,14.90 5.80,10.90" fill="#fbe7a0" stroke="#d4a02c" stroke-width=".9"/>
<polygon points="5.50,3.90 9.90,6.40 9.90,8.20 5.50,5.70" fill="#f4d470"/>
<polygon points="4.20,6.80 11.20,10.80 11.20,16.30 4.20,12.30" fill="#fbe7a0" stroke="#d4a02c" stroke-width=".9"/>
<polygon points="3.90,5.30 8.30,7.80 8.30,9.60 3.90,7.10" fill="#f4d470"/>
<polygon points="2.60,8.20 9.60,12.20 9.60,17.70 2.60,13.70" fill="#fbe7a0" stroke="#d4a02c" stroke-width=".9"/>
<polygon points="2.30,6.70 6.70,9.20 6.70,11.00 2.30,8.50" fill="#f4d470"/>
<polygon points="0.25,10.5 9.5,15.75 9.25,22.5 0.25,18" fill="#f0be5c" stroke="#7a4800" stroke-width="1.400" stroke-linejoin="round"/>
<polygon points="9.5,15.75 20.75,6 20.75,12.5 9.25,22.5" fill="#d0922c" stroke="#7a4800" stroke-width="1.400" stroke-linejoin="round"/>
<polygon points="1.9,14.2 6.9,17.1 6.9,20.2 1.9,17.4" fill="#b47c30"/>
<polygon points="2.9,15.6 5.9,17.3 5.9,18.8 2.9,17.1" fill="#f0be5c"/>
</g>
</defs></svg>
<!-- text -->
<div class="tx" style="left:25.8px;top:4.8px;font-size:11.5px;color:#2f2f3a;transform:scaleX(0.9284);">DOC10 (1) - Documents Details - Quality Management</div>
<div class="tx" style="left:12.0px;top:28.5px;font-size:12.2px;color:#2b2b2b;transform:scaleX(0.9267);">File</div>
<div class="tx" style="left:42.5px;top:28.5px;font-size:12.2px;color:#2b2b2b;transform:scaleX(0.9707);">Edit</div>
<div class="tx" style="left:75.5px;top:28.5px;font-size:12.2px;color:#2b2b2b;transform:scaleX(0.9694);">View</div>
<div class="tx" style="left:113.5px;top:28.5px;font-size:12.2px;color:#2b2b2b;transform:scaleX(1.0108);">Actions</div>
<div class="tx" style="left:167.0px;top:28.5px;font-size:12.2px;color:#2b2b2b;transform:scaleX(1.0125);">Window</div>
<div class="tx" style="left:223.5px;top:28.5px;font-size:12.2px;color:#2b2b2b;transform:scaleX(0.9929);">Help</div>
<div class="tx" style="left:44.5px;top:89.0px;font-size:11.5px;color:#4a4a4a;transform:scaleX(1.0091);">Warning: Where this icon appears, refer to the tooltip for more information.</div>
<div class="tx" style="left:59.0px;top:121.0px;font-size:11.5px;color:#ffffff;transform:scaleX(1.0154);font-weight:bold;text-shadow:0 0 1px rgba(120,120,120,.9);">Type</div>
<div class="tx" style="left:61.2px;top:148.0px;font-size:11.5px;color:#ffffff;transform:scaleX(1.0325);font-weight:bold;text-shadow:0 0 1px rgba(120,120,120,.9);">Title</div>
<div class="tx" style="left:417.0px;top:121.0px;font-size:11.5px;color:#ffffff;transform:scaleX(1.0448);font-weight:bold;text-shadow:0 0 1px rgba(120,120,120,.9);">Number</div>
<div class="tx" style="left:425.5px;top:148.0px;font-size:11.5px;color:#ffffff;transform:scaleX(1.0496);font-weight:bold;text-shadow:0 0 1px rgba(120,120,120,.9);">Status</div>
<div class="tx" style="left:610.0px;top:121.0px;font-size:11.5px;color:#ffffff;transform:scaleX(0.9784);font-weight:bold;text-shadow:0 0 1px rgba(120,120,120,.9);">Revision</div>
<div class="tx" style="left:95.0px;top:122.0px;font-size:11.5px;color:#1e1e1e;transform:scaleX(0.9165);">Procedures</div>
<div class="tx" style="left:95.0px;top:148.0px;font-size:11.5px;color:#1e1e1e;transform:scaleX(0.9089);">Supplier Assessment Form</div>
<div class="tx" style="left:471.5px;top:122.0px;font-size:11.5px;color:#1e1e1e;transform:scaleX(0.8707);">DOC10</div>
<div class="tx" style="left:471.5px;top:148.0px;font-size:11.5px;color:#1e1e1e;transform:scaleX(0.9704);">Active</div>
<div class="tx" style="left:667.5px;top:121.0px;font-size:11.5px;color:#1e1e1e;transform:scaleX(0.6868);">1</div>
<div class="tx" style="left:49.5px;top:180.0px;font-size:11.5px;color:#3a3a3a;transform:scaleX(1.0727);font-weight:bold;">Owner</div>
<div class="tx" style="left:48.5px;top:207.0px;font-size:11.5px;color:#3a3a3a;transform:scaleX(1.0454);font-weight:bold;">Author</div>
<div class="tx" style="left:49.5px;top:235.0px;font-size:11.5px;color:#3a3a3a;transform:scaleX(1.0159);font-weight:bold;">Change Details</div>
<div class="tx" style="left:275.5px;top:180.0px;font-size:11.5px;color:#3a3a3a;transform:scaleX(1.0361);font-weight:bold;">Active Date</div>
<div class="tx" style="left:270.2px;top:207.0px;font-size:11.5px;color:#3a3a3a;transform:scaleX(1.0359);font-weight:bold;">Review Date</div>
<div class="tx" style="left:551.0px;top:180.0px;font-size:11.5px;color:#3a3a3a;transform:scaleX(1.0108);font-weight:bold;">Filename</div>
<div class="tx" style="left:546.0px;top:207.0px;font-size:11.5px;color:#3a3a3a;transform:scaleX(1.0078);font-weight:bold;">Keywords</div>
<div class="tx" style="left:97.5px;top:180.0px;font-size:11.5px;color:#1e1e1e;transform:scaleX(0.9424);">Administrator, System</div>
<div class="tx" style="left:97.5px;top:207.0px;font-size:11.5px;color:#1e1e1e;transform:scaleX(0.9424);">Administrator, System</div>
<div class="tx" style="left:351.2px;top:180.0px;font-size:11.5px;color:#1e1e1e;transform:scaleX(0.9676);">20/05/2010</div>
<div class="tx" style="left:352.0px;top:207.0px;font-size:11.5px;color:#1e1e1e;transform:scaleX(0.9537);">18/09/2024</div>
<div class="tx" style="left:611.2px;top:180.0px;font-size:11.5px;color:#1a3cc4;transform:scaleX(0.9323);text-decoration:underline;">Form 1000 - Supplier Ass…</div>
<div class="tx" style="left:50.5px;top:294.0px;font-size:11.5px;color:#101010;transform:scaleX(1.0243);font-weight:bold;">Distribution</div>
<div class="tx" style="left:50.5px;top:328.0px;font-size:11.5px;color:#101010;transform:scaleX(1.0150);font-weight:bold;">Change Requests</div>
<div class="tx" style="left:50.5px;top:362.0px;font-size:11.5px;color:#101010;transform:scaleX(1.0236);font-weight:bold;">Review History</div>
<div class="tx" style="left:50.5px;top:396.0px;font-size:11.5px;color:#101010;transform:scaleX(0.9961);font-weight:bold;">Revision History</div>
<div class="tx" style="left:50.5px;top:430.0px;font-size:11.5px;color:#101010;transform:scaleX(0.9975);font-weight:bold;">Approved By</div>
<div class="tx" style="left:50.5px;top:464.0px;font-size:11.5px;color:#101010;transform:scaleX(1.0353);font-weight:bold;">Properties</div>
<!-- calendar popup -->
<div id="cal"></div>
<svg width="4.500" height="8" viewBox="0 0 5 9" style="left:364.300px;top:270.600px"><path d="M5,0 v9 l-5,-4.5 z" fill="#222"/></svg>
<svg width="4.500" height="8" viewBox="0 0 5 9" style="left:558px;top:270.600px"><path d="M0,0 v9 l5,-4.5 z" fill="#222"/></svg>
<div style="left:418px;top:374px;width:30px;height:22px;background:#b9ecf3"></div>
<div style="left:388px;top:396px;width:30px;height:22px;background:#b9ecf3;border:1px solid #9fdde8"></div>
<div class="dh" style="left:357px;top:285px">MO</div>
<div class="dh" style="left:387px;top:285px">TU</div>
<div class="dh" style="left:417px;top:285px">WE</div>
<div class="dh" style="left:447px;top:285px">TH</div>
<div class="dh" style="left:477px;top:285px">FR</div>
<div class="dh" style="left:507px;top:285px">SA</div>
<div class="dh" style="left:537px;top:285px">SU</div>
<div class="d o" style="left:358px;top:308px">26</div>
<div class="d o" style="left:388px;top:308px">27</div>
<div class="d o" style="left:418px;top:308px">28</div>
<div class="d o" style="left:448px;top:308px">29</div>
<div class="d o" style="left:478px;top:308px">30</div>
<div class="d o" style="left:508px;top:308px">31</div>
<div class="d w" style="left:538px;top:308px">1</div>
<div class="d" style="left:358px;top:330px">2</div>
<div class="d" style="left:388px;top:330px">3</div>
<div class="d" style="left:418px;top:330px">4</div>
<div class="d" style="left:448px;top:330px">5</div>
<div class="d" style="left:478px;top:330px">6</div>
<div class="d w" style="left:508px;top:330px">7</div>
<div class="d w" style="left:538px;top:330px">8</div>
<div class="d" style="left:358px;top:352px">9</div>
<div class="d" style="left:388px;top:352px">10</div>
<div class="d" style="left:418px;top:352px">11</div>
<div class="d" style="left:448px;top:352px">12</div>
<div class="d" style="left:478px;top:352px">13</div>
<div class="d w" style="left:508px;top:352px">14</div>
<div class="d w" style="left:538px;top:352px">15</div>
<div class="d" style="left:358px;top:374px">16</div>
<div class="d" style="left:388px;top:374px">17</div>
<div class="d" style="left:418px;top:374px">18</div>
<div class="d" style="left:448px;top:374px">19</div>
<div class="d" style="left:478px;top:374px">20</div>
<div class="d w" style="left:508px;top:374px">21</div>
<div class="d w" style="left:538px;top:374px">22</div>
<div class="d" style="left:358px;top:396px">23</div>
<div class="d" style="left:388px;top:396px">24</div>
<div class="d" style="left:418px;top:396px">25</div>
<div class="d" style="left:448px;top:396px">26</div>
<div class="d" style="left:478px;top:396px">27</div>
<div class="d w" style="left:508px;top:396px">28</div>
<div class="d w" style="left:538px;top:396px">29</div>
<div class="d" style="left:358px;top:418px">30</div>
<div class="d o" style="left:388px;top:418px">1</div>
<div class="d o" style="left:418px;top:418px">2</div>
<div class="d o" style="left:448px;top:418px">3</div>
<div class="d o" style="left:478px;top:418px">4</div>
<div class="d o" style="left:508px;top:418px">5</div>
<div class="d o" style="left:538px;top:418px">6</div>
<div class="btn" style="left:438px;top:443px;width:50px;height:18px;border-color:#a8a8a8;background:linear-gradient(#fdfdfd,#f3f3f3 50%,#e6e6e6)"></div>
<!-- calendar text -->
<div class="tx" style="left:414.3px;top:240.0px;font-size:11.5px;color:#1e1e1e;transform:scaleX(0.9393);">24 September 2024</div>
<div class="tx" style="left:422.1px;top:265.0px;font-size:11.5px;color:#1e1e1e;transform:scaleX(0.9383);">September 2024</div>
<div class="tx" style="left:448.5px;top:442.0px;font-size:11.5px;color:#1e1e1e;transform:scaleX(0.9242);">Clear</div>
</div>
</body>
</html>
